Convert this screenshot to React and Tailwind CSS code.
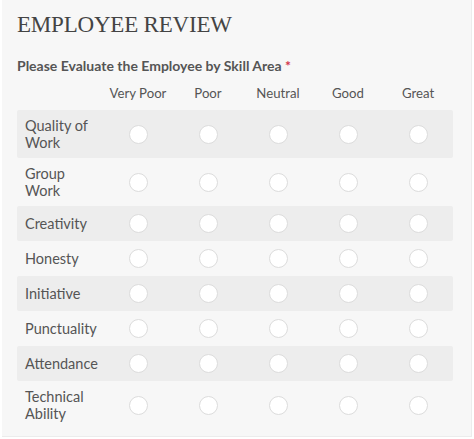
import React from "react";

const levels = ["Very Poor", "Poor", "Neutral", "Good", "Great"];
const skills = [
  { name: "Quality of Work", tall: true },
  { name: "Group Work", tall: true },
  { name: "Creativity" },
  { name: "Honesty" },
  { name: "Initiative" },
  { name: "Punctuality" },
  { name: "Attendance" },
  { name: "Technical Ability", tall: true },
];

const Radio = () => (
  <span className="block w-[19px] h-[19px] rounded-full bg-white border border-[#dcdcdc]" />
);

export default function App() {
  return (
    <div className="w-[474px] h-[439px] bg-white">
      <div
        className="ml-[2px] w-[470px] h-[437px] bg-[#f7f7f7] border-b border-r border-[#ececec] pl-[15px] pt-[10px]"
        style={{ fontFamily: "Lato, 'Open Sans', sans-serif" }}
      >
        <h1
          className="text-[23px] leading-[30px] tracking-[-0.2px] text-[#444]"
          style={{ fontFamily: "'Liberation Serif', serif" }}
        >
          EMPLOYEE REVIEW
        </h1>
        <p className="mt-[17px] text-[14px] leading-[18px] font-bold text-[#555]">
          Please Evaluate the Employee by Skill Area{" "}
          <span className="text-[#d2344a]">*</span>
        </p>
        <div className="w-[436px] mt-[10px]">
          <div className="grid grid-cols-[86px_repeat(5,70px)] h-[25px] items-start text-[13.2px] leading-[16px] text-[#555]">
            <span />
            {levels.map((l) => (
              <span key={l} className="text-center">
                {l}
              </span>
            ))}
          </div>
          {skills.map((s, i) => (
            <div
              key={s.name}
              className={`grid grid-cols-[86px_repeat(5,70px)] items-center ${
                s.tall ? "h-[48px]" : "h-[35px]"
              } ${i % 2 === 0 ? "bg-[#ededed] rounded-[2px]" : ""}`}
            >
              <span className="pl-[8px] pr-[4px] text-[14.5px] leading-[17px] text-[#555]">
                {s.name}
              </span>
              {levels.map((l) => (
                <span key={l} className="flex justify-center">
                  <Radio />
                </span>
              ))}
            </div>
          ))}
        </div>
      </div>
    </div>
  );
}
